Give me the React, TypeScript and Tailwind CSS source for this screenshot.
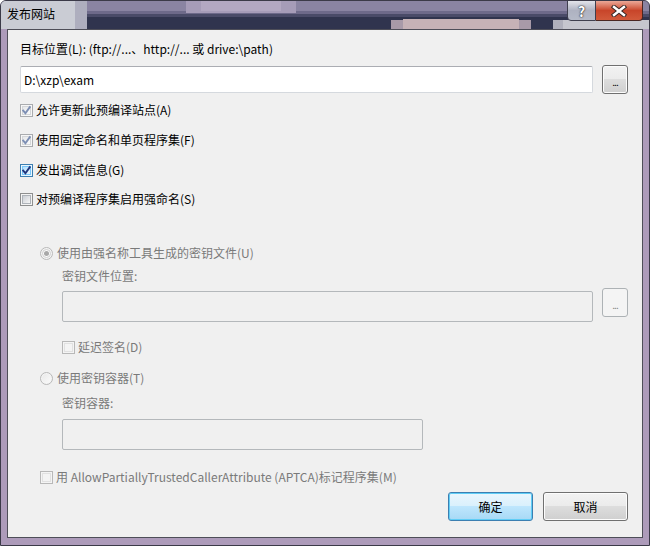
import React from "react";

type BoxKind = "dimOn" | "hotOn" | "off" | "dimOff";

// outer border / inner square styles per state
const boxOuter: Record<BoxKind, string> = {
  dimOn: "border-[#a9abae] bg-[#f7f7f7]",
  hotOn: "border-[#3c7fb1] bg-[#eaf6fd]",
  off: "border-[#8e8f8f] bg-[#f4f4f4]",
  dimOff: "border-[#b8b8b8] bg-[#f4f4f4]",
};

const boxInner: Record<BoxKind, string> = {
  dimOn: "border-[#d4d6d8] bg-linear-to-br from-[#e6e7e9] to-[#fbfbfb]",
  hotOn: "border-[#79c6f9] bg-linear-to-br from-[#b1dffd] to-[#e9f7fe]",
  off: "border-[#aeb3b9] bg-linear-to-br from-[#cbcfd5] to-[#f6f6f6]",
  dimOff: "border-[#e1e1e1] bg-[#f4f4f4]",
};

function CheckBox({ kind, checked }: { kind: BoxKind; checked?: boolean }) {
  return (
    <span
      className={`relative flex h-[13px] w-[13px] shrink-0 items-center justify-center border ${boxOuter[kind]}`}
    >
      <span className={`h-[9px] w-[9px] border ${boxInner[kind]}`} />
      {checked && (
        <svg
          viewBox="0 0 11 11"
          className="absolute left-0 top-0 h-[11px] w-[11px]"
          fill="none"
        >
          <path
            d="M2.2 5.6 L4.4 8.2 L8.8 2.2"
            stroke={kind === "hotOn" ? "#21357d" : "#7d8fb4"}
            strokeWidth="1.9"
            strokeLinecap="square"
          />
        </svg>
      )}
    </span>
  );
}

function Radio({ checked }: { checked?: boolean }) {
  return (
    <span className="flex h-[13px] w-[13px] shrink-0 items-center justify-center rounded-full border border-[#b8b8b8] bg-[#f4f4f4]">
      {checked ? (
        <span className="flex h-[9px] w-[9px] items-center justify-center rounded-full border border-[#cfcfcf] bg-[#fbfbfb]">
          <span className="h-[5px] w-[5px] rounded-full bg-[#a8a8a8]" />
        </span>
      ) : (
        <span className="h-[9px] w-[9px] rounded-full bg-linear-to-br from-[#e9e9e9] to-[#fafafa]" />
      )}
    </span>
  );
}

function DotsButton({ disabled }: { disabled?: boolean }) {
  return (
    <div
      className={
        disabled
          ? "flex h-[29px] w-[26px] shrink-0 items-center justify-center rounded-[3px] border border-[#adb2b5] bg-[#f4f4f4] text-[#838383]"
          : "flex h-[29px] w-[26px] shrink-0 items-center justify-center rounded-[3px] border border-[#707070] bg-[linear-gradient(to_bottom,#f2f2f2_0%,#ebebeb_50%,#dddddd_50%,#cfcfcf_100%)] shadow-[inset_0_0_0_1px_#fcfcfc]"
      }
    >
      <span className="pt-[5px] text-[10px] leading-[10px] tracking-[-1px]">...</span>
    </div>
  );
}

export default function App() {
  return (
    <div className="relative h-[546px] w-[650px] overflow-hidden rounded-t-[6px] border border-[#3b3a48] bg-[#ad9bba] font-['Noto_Sans_CJK_SC','Noto_Sans',sans-serif]">
      {/* Title bar (glass) */}
      <div className="relative h-[28px] bg-[#30344e]">
        {/* glass reflections, flat bands */}
        <div className="absolute left-0 top-0 h-[10px] w-full bg-[#8a84a2]" />
        <div className="absolute left-0 top-[10px] h-[3px] w-full bg-[#6e6a8a]" />
        <div className="absolute left-0 top-[13px] h-[3px] w-full bg-[#4a4b68]" />
        <div className="absolute left-[185px] top-0 h-[12px] w-[110px] bg-[#a69cb8]" />
        <div className="absolute left-[200px] top-0 h-[10px] w-[80px] bg-[#b3a8c2]" />
        <div className="absolute left-[390px] top-[19px] h-[9px] w-[140px] bg-[#a89aa8]" />
        <div className="absolute left-[402px] top-[18px] h-[10px] w-[116px] bg-[#c6b2b6]" />
        <div className="absolute left-0 top-0 h-full w-[86px] bg-[#aeaebe]" />
        <div className="absolute left-0 top-0 h-full w-[74px] bg-[#caccd4]" />
        <div className="absolute right-0 top-[19px] h-[9px] w-[96px] bg-[#b0b0bc]" />
        <div className="absolute right-0 top-[19px] h-[9px] w-[86px] bg-[#c6c6ce]" />
        <div className="absolute left-[6px] top-[5px] text-[12px] leading-[16px] text-black">
          发布网站
        </div>
        {/* caption buttons */}
        <div className="absolute right-[6px] top-[-1px] flex h-[21px]">
          <div className="flex w-[29px] items-center justify-center rounded-bl-[4px] border border-[#3f3f4e] bg-linear-to-b from-[#e3e4ea] via-[#aeb2c1] to-[#b5bac8]">
            <span className="text-[14px] font-bold leading-[14px] text-white [text-shadow:0_0_1px_#202020,0_0_2px_#202020]">
              ?
            </span>
          </div>
          <div className="flex w-[47px] items-center justify-center rounded-br-[4px] border border-l-0 border-[#4a2622] bg-linear-to-b from-[#eaa898] via-[#c8452a] to-[#d25a3b]">
            <svg viewBox="0 0 16 12" className="h-[12px] w-[16px]">
              <path d="M3 2 L13 10 M13 2 L3 10" stroke="#3a2a28" strokeWidth="4.4" strokeLinecap="square" />
              <path d="M3 2 L13 10 M13 2 L3 10" stroke="#ffffff" strokeWidth="2.4" strokeLinecap="square" />
            </svg>
          </div>
        </div>
      </div>

      {/* Client area */}
      <div className="relative mx-[6px] h-[509px] border border-[#4e4e58] bg-[#f0f0f0]">
        <div className="flex flex-col pl-[12px] pr-[14px] pt-[11px] text-[12px] leading-[16px] text-black">
          <div className="h-[16px] whitespace-nowrap">目标位置(L): (ftp://...、http://... 或 drive:\path)</div>

          <div className="mt-[8px] flex items-center gap-[9px]">
            <div className="flex h-[27px] w-[573px] items-center rounded-[2px] border border-[#d5d9de] border-t-[#abadb3] bg-white pl-[3px]">
              D:\xzp\exam
            </div>
            <DotsButton />
          </div>

          <div className="mt-[8px] flex h-[16px] items-center gap-[3px]">
            <CheckBox kind="dimOn" checked />
            <span>允许更新此预编译站点(A)</span>
          </div>
          <div className="mt-[14px] flex h-[16px] items-center gap-[3px]">
            <CheckBox kind="dimOn" checked />
            <span>使用固定命名和单页程序集(F)</span>
          </div>
          <div className="mt-[14px] flex h-[16px] items-center gap-[3px]">
            <CheckBox kind="hotOn" checked />
            <span>发出调试信息(G)</span>
          </div>
          <div className="mt-[13px] flex h-[16px] items-center gap-[3px]">
            <CheckBox kind="off" />
            <span>对预编译程序集启用强命名(S)</span>
          </div>

          {/* strong name options (disabled) */}
          <div className="flex flex-col pl-[20px] text-[#7a7a7a]">
            <div className="mt-[38px] flex h-[16px] items-center gap-[4px]">
              <Radio checked />
              <span>使用由强名称工具生成的密钥文件(U)</span>
            </div>
            <div className="flex flex-col pl-[22px]">
              <div className="mt-[7px] h-[16px]">密钥文件位置:</div>
              <div className="mt-[4px] flex items-start gap-[9px]">
                <div className="mt-[3px] h-[31px] w-[531px] rounded-[2px] border border-[#b4b8bb] bg-[#f0f0f0]" />
                <DotsButton disabled />
              </div>
              <div className="mt-[17px] flex h-[16px] items-center gap-[3px]">
                <CheckBox kind="dimOff" />
                <span>延迟签名(D)</span>
              </div>
            </div>

            <div className="mt-[15px] flex h-[16px] items-center gap-[4px]">
              <Radio />
              <span>使用密钥容器(T)</span>
            </div>
            <div className="flex flex-col pl-[22px]">
              <div className="mt-[9px] h-[16px]">密钥容器:</div>
              <div className="mt-[8px] h-[31px] w-[361px] rounded-[2px] border border-[#b4b8bb] bg-[#f0f0f0]" />
            </div>

            <div className="mt-[19px] flex h-[16px] items-center gap-[3px]">
              <CheckBox kind="dimOff" />
              <span className="whitespace-nowrap">用 AllowPartiallyTrustedCallerAttribute (APTCA)标记程序集(M)</span>
            </div>
          </div>

          <div className="mt-[7px] flex justify-end gap-[10px]">
            <button className="flex h-[29px] w-[85px] items-center justify-center rounded-[3px] border border-[#3c7fb1] bg-[linear-gradient(to_bottom,#eaf6fd_0%,#d9f0fc_50%,#bee6fd_50%,#a7d9f5_100%)] text-[12px] text-black shadow-[inset_0_0_0_1px_#5fcdf6]">
              确定
            </button>
            <button className="flex h-[29px] w-[85px] items-center justify-center rounded-[3px] border border-[#707070] bg-[linear-gradient(to_bottom,#f2f2f2_0%,#ebebeb_50%,#dddddd_50%,#cfcfcf_100%)] text-[12px] text-black shadow-[inset_0_0_0_1px_#fcfcfc]">
              取消
            </button>
          </div>
        </div>
      </div>
    </div>
  );
}
